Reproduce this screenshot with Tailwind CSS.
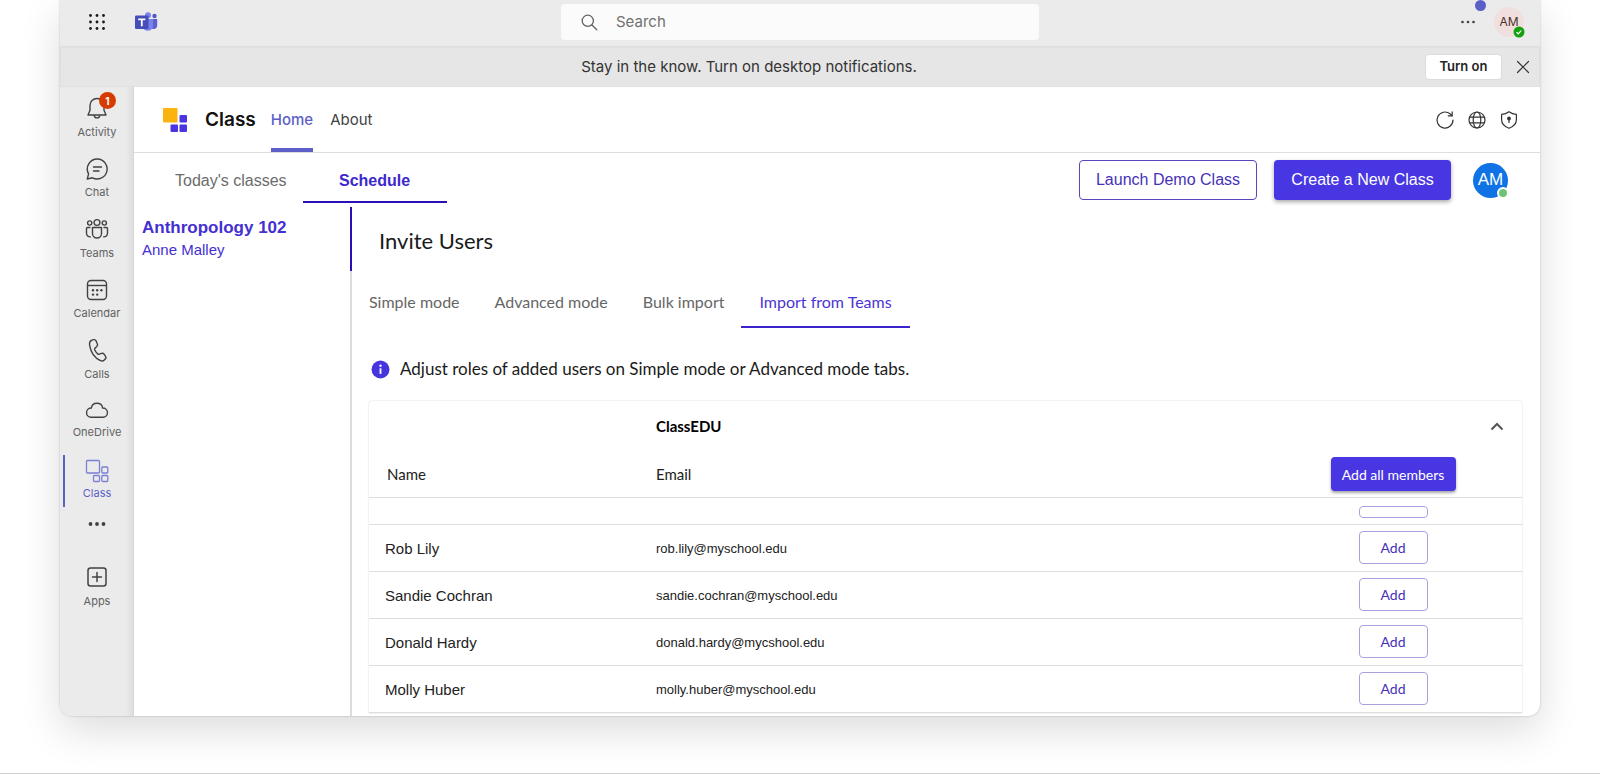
<!DOCTYPE html>
<html lang="en">
<head>
<meta charset="utf-8">
<title>Class</title>
<script src="https://cdn.jsdelivr.net/npm/@tailwindcss/browser@4"></script>
</head>
<body class="flex min-h-screen flex-col border-b border-[#cfcfcf] bg-white font-['Inter',sans-serif] text-[#242424]">
<div class="mx-[60px] mb-[57px] flex flex-1 flex-col overflow-hidden rounded-b-xl bg-white shadow-[0_14px_40px_rgba(0,0,0,0.14),0_0_2px_rgba(0,0,0,0.25)]">

  <!-- Title bar -->
  <header class="flex h-12 items-center border-b-2 border-[#e0e0e0] bg-[#ebebeb] pl-7 pr-4 pb-[2px]">
    <div class="flex flex-1 items-center gap-7">
      <button aria-label="App launcher" class="text-[#1a1a1a]">
        <svg width="18" height="18" viewBox="0 0 18 18" fill="currentColor"><circle cx="2.500" cy="2.500" r="1.400"/><circle cx="9" cy="2.500" r="1.400"/><circle cx="15.500" cy="2.500" r="1.400"/><circle cx="2.500" cy="9" r="1.400"/><circle cx="9" cy="9" r="1.400"/><circle cx="15.500" cy="9" r="1.400"/><circle cx="2.500" cy="15.500" r="1.400"/><circle cx="9" cy="15.500" r="1.400"/><circle cx="15.500" cy="15.500" r="1.400"/></svg>
      </button>
      <svg width="24" height="20" viewBox="0 0 24 20" aria-label="Teams">
        <circle cx="20.500" cy="4" r="2.200" fill="#5059c9"/>
        <path d="M16 7h7.200v6.300a3.600 3.600 0 0 1-7.200 0z" fill="#5b62cf"/>
        <circle cx="14" cy="3.200" r="3" fill="#7b83eb"/>
        <path d="M8.500 7H19v6.500a5.200 5.200 0 0 1-10.500 0z" fill="#7b83eb"/>
        <rect x="1" y="3.500" width="13.500" height="13.500" rx="1.300" fill="#454db8"/>
        <path d="M4.200 6.500h7.200v1.700H8.700v6H6.900v-6H4.200z" fill="#fff"/>
      </svg>
    </div>
    <label class="flex h-9 w-[478px] items-center gap-[18px] rounded-[4px] bg-[#fbfbfb] pl-5">
      <svg width="17" height="17" viewBox="0 0 17 17" fill="none" stroke="#616161" stroke-width="1.300" stroke-linecap="round"><circle cx="6.800" cy="6.800" r="5.600"/><path d="M11 11l4.800 4.800"/></svg>
      <input type="search" aria-label="Search" placeholder="Search" class="min-w-0 flex-1 bg-transparent text-[15px] outline-none placeholder:text-[#707070]">
    </label>
    <div class="flex flex-1 items-center justify-end gap-[18px] pl-3">
      <button aria-label="More options" class="relative">
        <svg width="16" height="16" viewBox="0 0 16 16" fill="#424242"><circle cx="2.500" cy="8" r="1.300"/><circle cx="8" cy="8" r="1.300"/><circle cx="13.500" cy="8" r="1.300"/></svg>
        <span class="absolute -top-[14px] left-[15px] size-[11px] rounded-full bg-[#5b5fc7]"></span>
      </button>
      <button class="relative grid size-[30px] place-items-center rounded-full bg-[#f0dfdd] text-xs text-[#4a3230]">AM
        <svg class="absolute -right-px -bottom-px" width="12" height="12" viewBox="0 0 12 12"><circle cx="6" cy="6" r="5.500" fill="#13a10e"/><path d="M3.500 6.200l1.700 1.600 3-3.200" fill="none" stroke="#fff" stroke-width="1.200"/></svg>
      </button>
    </div>
  </header>

  <!-- Notification strip -->
  <div class="flex h-[39px] items-center border border-t-0 border-[#e0e0e0] bg-[#e6e6e6] pr-[9px]">
    <p class="flex-1 pt-px pl-3 text-center text-[15px] text-[#333]">Stay in the know. Turn on desktop notifications.</p>
    <div class="flex items-center gap-[14px]">
      <button class="h-[26px] w-[77px] rounded-[4px] border border-[#dcdcdc] bg-white text-[13px] font-semibold text-[#242424]">Turn on</button>
      <button aria-label="Dismiss"><svg width="14" height="14" viewBox="0 0 14 14" stroke="#333" stroke-width="1.200" stroke-linecap="round"><path d="M1.500 1.500l11 11M12.500 1.500l-11 11"/></svg></button>
    </div>
  </div>

  <div class="flex flex-1">
    <!-- App rail -->
    <nav class="flex w-[74px] flex-col border-r border-[#d8d8d8] bg-linear-to-r from-[#ebebeb] from-90% to-[#dedede] pl-px text-[11px] text-[#616161]">
      <a href="#" class="flex h-[61px] flex-col items-center justify-between pt-[9px] pb-2">
        <span class="relative"><svg width="24" height="24" viewBox="0 0 24 24" fill="none" stroke="#424242" stroke-width="1.400" stroke-linejoin="round"><path d="M12 2.500c-4 0-7 3-7 7v4.800L3 19h18l-2-4.700V9.500c0-4-3-7-7-7z"/><path d="M9.300 19.200a2.700 2.700 0 0 0 5.400 0"/></svg>
        <span class="absolute -top-1 left-[14px] grid size-[17px] place-items-center rounded-full bg-[#d83b01] text-[10px] leading-none font-bold text-white">1</span></span>
        <span class="leading-4">Activity</span>
      </a>
      <a href="#" class="flex h-[60px] flex-col items-center justify-between pt-[9px] pb-2">
        <svg width="24" height="24" viewBox="0 0 24 24" fill="none" stroke="#424242" stroke-width="1.400" stroke-linecap="round" stroke-linejoin="round"><path d="M12.500 2A10 10 0 1 1 7.400 20.800L2.300 22l1.300-5.100A10 10 0 0 1 12.500 2z"/><path d="M8.500 10h8M8.500 14h5.500"/></svg>
        <span class="leading-4">Chat</span>
      </a>
      <a href="#" class="flex h-[61px] flex-col items-center justify-between pt-[9px] pb-2">
        <svg width="24" height="24" viewBox="0 0 24 24" fill="none" stroke="#424242" stroke-width="1.400" stroke-linecap="round" stroke-linejoin="round"><circle cx="12" cy="5.500" r="2.900"/><circle cx="4.700" cy="6" r="2.100"/><circle cx="19.300" cy="6" r="2.100"/><path d="M7.500 10.500h9v6a4.500 4.500 0 0 1-9 0z"/><path d="M5 10.500H2.500a1 1 0 0 0-1 1v4.800a3.600 3.600 0 0 0 3.900 3.600M19 10.500h2.500a1 1 0 0 1 1 1v4.800a3.600 3.600 0 0 1-3.900 3.600"/></svg>
        <span class="leading-4">Teams</span>
      </a>
      <a href="#" class="flex h-[60px] flex-col items-center justify-between pt-[9px] pb-2">
        <svg width="24" height="24" viewBox="0 0 24 24" fill="none" stroke="#424242" stroke-width="1.400"><rect x="2.500" y="2.500" width="19" height="19" rx="3.500"/><path d="M2.500 7.500h19"/><g fill="#424242" stroke="none"><circle cx="8" cy="12.300" r="1.200"/><circle cx="12.200" cy="12.300" r="1.200"/><circle cx="16.400" cy="12.300" r="1.200"/><circle cx="8" cy="16.600" r="1.200"/><circle cx="12.200" cy="16.600" r="1.200"/></g></svg>
        <span class="leading-4">Calendar</span>
      </a>
      <a href="#" class="flex h-[61px] flex-col items-center justify-between pt-[9px] pb-2">
        <svg width="24" height="24" viewBox="0 0 24 24" fill="none" stroke="#424242" stroke-width="1.400" stroke-linejoin="round"><path d="M6.800 2.200l1.700-.5c1.100-.3 2.100.2 2.600 1.200l1.200 2.900c.4.900.2 1.900-.5 2.600L9.900 10.200c-.4.400-.4.900-.2 1.500.7 1.700 1.700 3.100 3 4.200.4.400 1 .5 1.500.3l2.300-.8c1-.3 2 0 2.600.8l1.400 2.100c.6.900.5 2.100-.3 2.800l-.9.900c-1.100 1-2.700 1.200-4 .5C10.200 20.300 6 15 4.700 7.700c-.4-2.500-.2-4.900 2.100-5.500z"/></svg>
        <span class="leading-4">Calls</span>
      </a>
      <a href="#" class="flex h-[58px] flex-col items-center justify-between pt-2 pb-2">
        <svg width="24" height="24" viewBox="0 0 24 24" fill="none" stroke="#424242" stroke-width="1.400"><path d="M6.300 10a5.800 5.800 0 0 1 11.400 0 4.600 4.600 0 0 1 .3 9.200H6A4.600 4.600 0 0 1 6.300 10z"/></svg>
        <span class="leading-4">OneDrive</span>
      </a>
      <a href="#" aria-current="page" class="relative flex h-[61px] flex-col items-center justify-between pt-[11px] pb-2 text-[#5b5fc7]">
        <span class="absolute top-[7px] left-[2px] h-[52px] w-[2px] bg-[#5b5fc7]"></span>
        <svg width="24" height="24" viewBox="0 0 24 24" fill="none" stroke="#7b7fd4" stroke-width="1.300"><rect x="1.500" y="1.500" width="13" height="12.500" rx="1"/><rect x="16.800" y="8" width="6" height="6" rx="1"/><rect x="8.500" y="16.500" width="6" height="6" rx="1"/><rect x="16.800" y="16.500" width="6" height="6" rx="1"/></svg>
        <span class="leading-4">Class</span>
      </a>
      <button aria-label="More apps" class="flex h-[46px] items-start justify-center pt-[6px]">
        <svg width="20" height="18" viewBox="0 0 20 18" fill="#424242"><circle cx="3.500" cy="9" r="1.900"/><circle cx="10" cy="9" r="1.900"/><circle cx="16.500" cy="9" r="1.900"/></svg>
      </button>
      <a href="#" class="flex h-[60px] flex-col items-center justify-between pt-[10px] pb-[6px]">
        <svg width="24" height="24" viewBox="0 0 24 24" fill="none" stroke="#424242" stroke-width="1.500" stroke-linecap="round"><rect x="3" y="3" width="18" height="18" rx="2.500"/><path d="M12 7.500v9M7.500 12h9"/></svg>
        <span class="leading-4">Apps</span>
      </a>
    </nav>

    <main class="flex flex-1 flex-col">
      <!-- App header -->
      <div class="flex h-[66px] items-center border-b border-[#dedede] pl-[29px] pr-[21px]">
        <svg width="24" height="24" viewBox="0 0 24 24" aria-hidden="true"><rect width="14.500" height="14.500" rx="1" fill="#fbb40f"/><rect x="16.500" y="7" width="7.500" height="7.500" rx="1" fill="#4a35e0"/><rect x="7.500" y="16.500" width="7.500" height="7.500" rx="1" fill="#4a35e0"/><rect x="16.500" y="16.500" width="7.500" height="7.500" rx="1" fill="#4a35e0"/></svg>
        <h1 class="ml-[18px] pt-[2px] text-[19px] font-semibold text-[#111]">Class</h1>
        <nav class="ml-[15px] flex h-full gap-[17px] text-[15px]">
          <a href="#" class="flex items-center border-b-4 border-[#5b5fc7] pt-[5px] font-medium text-[#5b5fc7]">Home</a>
          <a href="#" class="flex items-center pt-px text-[#424242]">About</a>
        </nav>
        <div class="ml-auto flex gap-[12px]">
          <button aria-label="Reload"><svg width="20" height="20" viewBox="0 0 20 20" fill="none" stroke="#333" stroke-width="1.200" stroke-linecap="round"><path d="M18 10a8 8 0 1 1-3-6.200L17 5.600"/><path d="M17.200 1.800v4h-4"/></svg></button>
          <button aria-label="Open website"><svg width="20" height="20" viewBox="0 0 20 20" fill="none" stroke="#333" stroke-width="1.200"><circle cx="10" cy="10" r="8"/><ellipse cx="10" cy="10" rx="3.800" ry="8"/><path d="M2.800 7.200h14.400M2.800 12.800h14.400"/></svg></button>
          <button aria-label="Privacy"><svg width="20" height="20" viewBox="0 0 20 20" fill="none" stroke="#333" stroke-width="1.200" stroke-linejoin="round"><path d="M10 1.800c2.300 1.700 4.700 2.500 7.400 2.600v5.200c0 4-2.500 7-7.400 8.700-4.900-1.700-7.400-4.700-7.400-8.700V4.400C5.300 4.300 7.700 3.500 10 1.800z"/><circle cx="10" cy="8.500" r="1.300" fill="#333"/><path d="M10 9v4"/></svg></button>
        </div>
      </div>

      <!-- Class tabs and actions -->
      <div class="flex h-[54px] items-start pl-[25px] pr-8 font-['Liberation_Sans',sans-serif] text-base">
        <div class="flex h-[50px] items-stretch">
          <button class="px-4 pt-[5px] text-[#6b6b6b]">Today's classes</button>
          <button class="w-[144px] border-b-2 border-[#2a0fb8] pt-[7px] font-bold text-[#3d28cf]">Schedule</button>
        </div>
        <div class="ml-auto flex items-center pt-[7px]">
          <button class="h-10 w-[178px] rounded-[4px] border border-[#5b45c0] text-[#4632b8]">Launch Demo Class</button>
          <button class="ml-[17px] h-10 w-[177px] rounded-[4px] bg-[#4836e3] text-white shadow-[0_2px_4px_rgba(0,0,0,0.35)]">Create a New Class</button>
          <button class="relative ml-[22px] size-[35px] rounded-full bg-[#0f73e6] text-[17px] text-white">AM<span class="absolute -right-px -bottom-px size-3 rounded-full border-2 border-white bg-[#6fc276]"></span></button>
        </div>
      </div>

      <div class="flex flex-1">
        <!-- Class list -->
        <div class="w-[218px] border-r-2 border-[#dcdcdc] font-['Liberation_Sans',sans-serif]">
          <a href="#" class="-mr-[2px] block h-[64px] border-r-2 border-[#2a0fb8] pt-[10px] pl-2 text-[#4430d2]">
            <span class="block text-[17px] leading-[22px] font-bold">Anthropology 102</span>
            <span class="block text-[15px] leading-[22px]">Anne Malley</span>
          </a>
        </div>

        <section class="flex-1 pr-[18px] font-['Lato',sans-serif]">
          <h2 class="pt-[19px] pl-[27px] text-[22px] leading-[30px] text-[#1a1a1a]">Invite Users</h2>
          <div class="mt-[20px] flex h-[52px] text-base text-[#666]">
            <button class="px-[17px]">Simple mode</button>
            <button class="px-[18px]">Advanced mode</button>
            <button class="px-[17px]">Bulk import</button>
            <button class="border-y-2 border-t-transparent border-b-[#3a22cc] px-[18px] text-[#4a34d6]">Import from Teams</button>
          </div>
          <p class="mt-[29px] flex items-center gap-[10px] pl-[19px] text-[17px] leading-6 text-[#1a1a1a]">
            <svg width="19" height="19" viewBox="0 0 19 19" aria-hidden="true"><circle cx="9.500" cy="9.500" r="9" fill="#4634dc"/><circle cx="9.500" cy="5.700" r="1.200" fill="#fff"/><path d="M9.500 8.300v5.600" stroke="#fff" stroke-width="1.800"/></svg>
            Adjust roles of added users on Simple mode or Advanced mode tabs.
          </p>

          <div class="mt-[20px] ml-[17px] rounded-t-[4px] shadow-[0_0_2px_rgba(0,0,0,0.2)]">
            <table class="w-full table-fixed border-collapse text-left text-[15px] text-[#222]">
              <colgroup><col class="w-[271px]"><col><col class="w-[258px]"></colgroup>
              <thead>
                <tr class="h-[49px]">
                  <td></td>
                  <th scope="colgroup" class="pt-[2px] pl-4 font-bold text-black">ClassEDU</th>
                  <td class="pr-[17px] text-right"><button aria-label="Collapse" class="align-middle"><svg width="16" height="16" viewBox="0 0 16 16" fill="none" stroke="#555" stroke-width="2"><path d="M2.500 10.500L8 5l5.500 5.500"/></svg></button></td>
                </tr>
                <tr class="h-[47px] border-b border-[#dedede]">
                  <th scope="col" class="pt-[2px] pl-[18px] font-normal">Name</th>
                  <th scope="col" class="pt-[2px] pl-4 font-normal">Email</th>
                  <td class="pt-[2px] text-center"><button class="h-[34px] w-[125px] rounded-[4px] bg-[#4836e3] align-middle text-[14px] text-white shadow-[0_2px_3px_rgba(0,0,0,0.35)]">Add all members</button></td>
                </tr>
              </thead>
              <tbody class="font-['Liberation_Sans',sans-serif]">
                <tr class="h-[27px] border-b border-[#dedede]"><td></td><td></td><td class="text-center leading-none"><button aria-label="Add" class="h-3 w-[69px] rounded-[4px] border border-[#a9a0e0] align-middle"></button></td></tr>
                <tr class="h-[47px] border-b border-[#dedede]"><td class="pt-[3px] pl-4">Rob Lily</td><td class="pt-[3px] pl-4 text-[13px]">rob.lily@myschool.edu</td><td class="text-center"><button class="h-[33px] w-[69px] rounded-[4px] border border-[#a9a0e0] align-middle font-['Lato',sans-serif] text-[14px] text-[#4632b8]">Add</button></td></tr>
                <tr class="h-[47px] border-b border-[#dedede]"><td class="pt-[3px] pl-4">Sandie Cochran</td><td class="pt-[3px] pl-4 text-[13px]">sandie.cochran@myschool.edu</td><td class="text-center"><button class="h-[33px] w-[69px] rounded-[4px] border border-[#a9a0e0] align-middle font-['Lato',sans-serif] text-[14px] text-[#4632b8]">Add</button></td></tr>
                <tr class="h-[47px] border-b border-[#dedede]"><td class="pt-[3px] pl-4">Donald Hardy</td><td class="pt-[3px] pl-4 text-[13px]">donald.hardy@mycshool.edu</td><td class="text-center"><button class="h-[33px] w-[69px] rounded-[4px] border border-[#a9a0e0] align-middle font-['Lato',sans-serif] text-[14px] text-[#4632b8]">Add</button></td></tr>
                <tr class="h-[47px] border-b border-[#dedede]"><td class="pt-[3px] pl-4">Molly Huber</td><td class="pt-[3px] pl-4 text-[13px]">molly.huber@myschool.edu</td><td class="text-center"><button class="h-[33px] w-[69px] rounded-[4px] border border-[#a9a0e0] align-middle font-['Lato',sans-serif] text-[14px] text-[#4632b8]">Add</button></td></tr>
              </tbody>
            </table>
          </div>
        </section>
      </div>
    </main>
  </div>
</div>
</body>
</html>
